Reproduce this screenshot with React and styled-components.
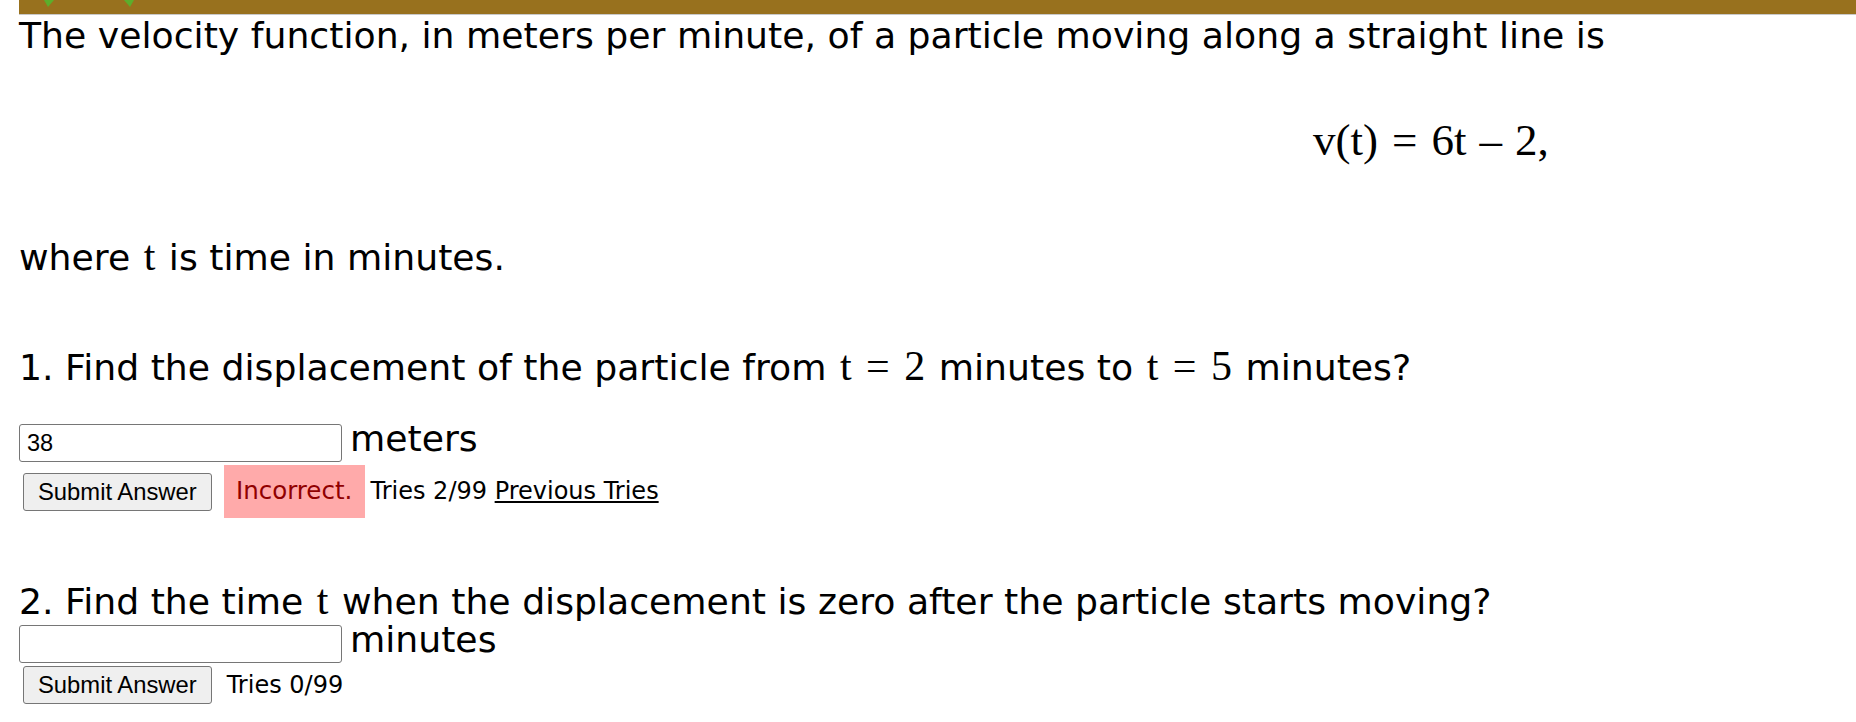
import React from "react";
import styled, { createGlobalStyle } from "styled-components";

const GlobalStyle = createGlobalStyle`
  html, body {
    margin: 0;
    padding: 0;
    background: #fff;
  }
  body {
    font-family: "DejaVu Sans", Verdana, sans-serif;
    color: #000;
  }
`;

const Page = styled.div`
  padding-left: 19px;
  overflow: hidden;
`;

const TopBar = styled.div`
  height: 14px;
  background: #98711e;
  border-bottom: 1px solid #c8c8c8;
  display: flex;
  align-items: flex-start;
  gap: 70px;
  padding-left: 25px;
`;

const Para = styled.p`
  margin: ${(p) => p.$top || 0}px 0 0;
  font-size: 36.2px;
  line-height: 41px;
  white-space: nowrap;
`;

// inline math, set a bit larger than the text like the rendered TeX
const Var = styled.span`
  font-family: "Liberation Serif", "Times New Roman", serif;
  font-size: 42px;
  line-height: 0.8;
  word-spacing: 4px;
  margin: 0 2px;
`;

const MathDisplay = styled.div`
  margin: 61px 0 74px;
  padding-left: 1294px;
  font-family: "Liberation Serif", "Times New Roman", serif;
  font-size: 45px;
  line-height: 46px;
  white-space: nowrap;
`;

const Op = styled.span`
  margin: 0 ${(p) => p.$gap}px;
`;

const AnswerRow = styled.div`
  display: flex;
  align-items: flex-end;
  margin-top: ${(p) => p.$top}px;
`;

const AnswerInput = styled.input`
  box-sizing: border-box;
  width: 323px;
  height: 38px;
  margin: 0;
  padding: 0 7px;
  border: 1px solid #767676;
  border-radius: 3px;
  font-family: "Liberation Sans", Arial, sans-serif;
  font-size: 23.6px;
  color: #000;
  background: #fff;
`;

const Unit = styled.span`
  font-size: 36.2px;
  line-height: 26px;
  margin: 0 0 10px 8px;
`;

const FeedbackRow = styled.div`
  display: flex;
  align-items: center;
  margin-top: 3px;
  font-size: 24.5px;
  line-height: 28.5px;
  white-space: nowrap;
`;

const SubmitButton = styled.button`
  box-sizing: border-box;
  height: 38px;
  margin: 0 0 0 4px;
  padding: 0 14px;
  border: 1px solid #767676;
  border-radius: 3px;
  background: #efefef;
  font-family: "Liberation Sans", Arial, sans-serif;
  font-size: 23.8px;
  color: #000;
`;

const Incorrect = styled.span`
  margin-left: 12px;
  padding: 12.25px;
  background: #ffaaaa;
  color: #900000;
`;

const Tries = styled.span`
  margin-left: ${(p) => p.$gap}px;
  font-size: 24px;
`;

const PrevLink = styled.a`
  color: #000;
  text-decoration: underline;
`;

function Arrows() {
  return (
    <>
      <svg width="10" height="7" viewBox="0 0 10 7">
        <path d="M0 0 L10 0 L4 7 Z" fill="#5cae2c" />
      </svg>
      <svg width="10" height="7" viewBox="0 0 10 7">
        <path d="M0 0 L10 0 L6 7 Z" fill="#5cae2c" />
      </svg>
    </>
  );
}

export default function App() {
  return (
    <Page>
      <GlobalStyle />
      <TopBar>
        <Arrows />
      </TopBar>

      <Para>
        The velocity function, in meters per minute, of a particle moving along a straight line is
      </Para>

      <MathDisplay>
        v(t)
        <Op $gap={14}>=</Op>
        6t
        <Op $gap={13}>–</Op>
        2,
      </MathDisplay>

      <Para>
        where <Var>t</Var> is time in minutes.
      </Para>

      <Para $top={69}>
        1. Find the displacement of the particle from <Var>t = 2</Var> minutes to{" "}
        <Var>t = 5</Var> minutes?
      </Para>
      <AnswerRow $top={36}>
        <AnswerInput defaultValue="38" />
        <Unit>meters</Unit>
      </AnswerRow>
      <FeedbackRow>
        <SubmitButton>Submit Answer</SubmitButton>
        <Incorrect>Incorrect.</Incorrect>
        <Tries $gap={6}>
          Tries 2/99 <PrevLink href="#">Previous Tries</PrevLink>
        </Tries>
      </FeedbackRow>

      <Para $top={63}>
        2. Find the time <Var>t</Var> when the displacement is zero after the particle starts moving?
      </Para>
      <AnswerRow $top={3}>
        <AnswerInput />
        <Unit>minutes</Unit>
      </AnswerRow>
      <FeedbackRow>
        <SubmitButton>Submit Answer</SubmitButton>
        <Tries $gap={15}>Tries 0/99</Tries>
      </FeedbackRow>
    </Page>
  );
}
